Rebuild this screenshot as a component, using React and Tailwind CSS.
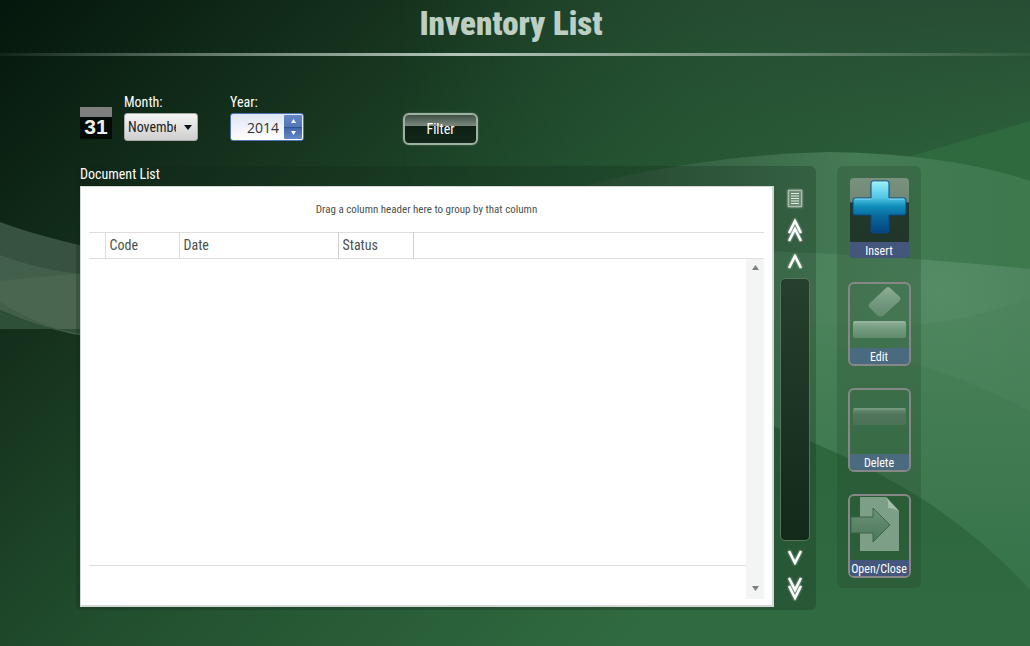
import React, { useState } from 'react'

const months = ['January', 'February', 'March', 'April', 'May', 'June', 'July', 'August', 'September', 'October', 'November', 'December']

const App = () => {
    return (
        <div className="relative isolate min-h-screen flex flex-col overflow-hidden bg-[#1d4429] font-['Liberation_Sans_Narrow','Roboto_Condensed','Liberation_Sans',sans-serif] text-white">
            <Backdrop />
            <header className="h-[56px] flex flex-col justify-between">
                <h1 className="pt-1 pr-2 text-center text-[33px] leading-10 font-black text-[#bccfc2]">Inventory List</h1>
                <div className="h-[3px] bg-[linear-gradient(to_right,#b4c6b910_0%,#b4c6b980_20%,#b4c6b9_45%,#b4c6b9b0_65%,#b4c6b910_100%)]"></div>
            </header>
            <main className="flex-1 flex flex-col pl-[76px] pr-[109px] pb-9">
                <FilterBar />
                <div className="flex-1 flex items-start gap-[21px]">
                    <DocumentPanel />
                    <ActionMenu />
                </div>
            </main>
        </div>
    )
}

export default App


const FilterBar = ()=>{
    const [month,setMonth] = useState('November')
    const [year,setYear] = useState(2014)

    return (
        <div className="h-[110px] pt-9 pl-1 flex items-start">
            <CalendarIcon />
            <div className="ml-3 w-[74px]">
                <label htmlFor="month" className="block pb-px text-[14px] leading-5">Month:</label>
                <div className="relative">
                    <select id="month" value={month} onChange={(e)=>setMonth(e.target.value)}
                        className="block appearance-none w-full h-7 pl-[3px] pr-[21px] rounded-[3px] border border-[#a9a9a9] bg-linear-to-b from-[#f4f4f4] to-[#cfcfcf] text-[14px] text-[#222] outline-none">
                        {months.map((m)=><option key={m}>{m}</option>)}
                    </select>
                    <svg className="absolute right-[6px] top-3 pointer-events-none" width="8" height="5" viewBox="0 0 8 5"><path d="M0 0h8L4 5z" fill="#111" /></svg>
                </div>
            </div>
            <div className="ml-8 w-[74px]">
                <label htmlFor="year" className="block pb-px text-[14px] leading-5">Year:</label>
                <div className="h-7 flex rounded-[3px] border border-[#4f74b8] bg-linear-to-b from-[#dfe5f2] to-white overflow-hidden">
                    <input id="year" type="text" value={year} onChange={(e)=>setYear(Number(e.target.value) || 0)}
                        className="w-full min-w-0 pr-1 pt-px text-right font-['Open_Sans',sans-serif] text-[14px] text-[#333] outline-none" />
                    <div className="w-[18px] shrink-0 m-px flex flex-col gap-px bg-[#2f5496] rounded-xs overflow-hidden">
                        <button aria-label="Next year" onClick={()=>setYear(year + 1)} className="flex-1 flex items-center justify-center bg-linear-to-b from-[#6486c4] to-[#5077b9] cursor-pointer">
                            <svg width="5" height="4" viewBox="0 0 5 4"><path d="M0 4h5L2.500 0z" fill="#fff" /></svg>
                        </button>
                        <button aria-label="Previous year" onClick={()=>setYear(year - 1)} className="flex-1 flex items-center justify-center bg-linear-to-b from-[#4268ab] to-[#6389c8] cursor-pointer">
                            <svg width="5" height="4" viewBox="0 0 5 4"><path d="M0 0h5L2.500 4z" fill="#fff" /></svg>
                        </button>
                    </div>
                </div>
            </div>
            <button className="ml-[99px] mt-[21px] w-[75px] h-8 rounded-md border-2 border-[#9db0a2] bg-[linear-gradient(to_bottom,#3e4f43_0%,#7b887e_38%,#0c2013_40%,#12281a_100%)] text-[14px] leading-none shadow-[0_0_2px_rgba(200,220,205,0.4)] cursor-pointer">Filter</button>
        </div>
    )
}


const DocumentPanel = ()=>{
    return (
        <section className="flex-1 min-w-0 self-stretch flex flex-col rounded-md bg-[#0f2417]/25 pl-1 pb-[3px]">
            <h2 className="h-5 text-[14px] leading-4">Document List</h2>
            <div className="flex-1 flex">
                <DocumentGrid />
                <RecordNavigator />
            </div>
        </section>
    )
}


const DocumentGrid = ()=>{
    return (
        <div className="flex-1 min-w-0 flex flex-col bg-white border-2 border-t border-l border-[#d6d6d6] px-2 pb-[6px] text-[#4a524d]">
            <p className="h-[45px] pt-[15px] text-center text-[11px] leading-4">Drag a column header here to group by that column</p>
            <table className="w-full table-fixed border-y border-[#dedede] text-left text-[14px]">
                <thead>
                    <tr className="h-[26px]">
                        <th aria-label="Row" className="w-4"></th>
                        <th className="w-[74px] pl-1 border-l border-[#dedede] font-normal">Code</th>
                        <th className="w-[159px] pl-1 border-l border-[#dedede] font-normal">Date</th>
                        <th className="w-[75px] pl-1 border-x border-[#cfcfcf] font-normal">Status</th>
                        <td></td>
                    </tr>
                </thead>
            </table>
            <div className="flex-1 flex">
                <div className="flex-1 flex flex-col">
                    <div className="flex-1 border-b border-[#dedede]"></div>
                    <div className="h-[33px]"></div>
                </div>
                <div className="w-[18px] pt-[6px] pb-2 flex flex-col items-center justify-between bg-[#f3f5f4]">
                    <button aria-label="Scroll up"><svg width="7" height="5" viewBox="0 0 7 5"><path d="M0 5h7L3.500 0z" fill="#7c7f7d" /></svg></button>
                    <button aria-label="Scroll down"><svg width="7" height="5" viewBox="0 0 7 5"><path d="M0 0h7L3.500 5z" fill="#7c7f7d" /></svg></button>
                </div>
            </div>
        </div>
    )
}


const navButton = "w-6 flex justify-center cursor-pointer drop-shadow-[0_0_1px_rgba(255,255,255,0.7)]"

const RecordNavigator = ()=>{
    return (
        <div className="w-[42px] flex flex-col items-center pt-[3px] pb-[6px]">
            <button aria-label="Show page" className={navButton}>
                <svg width="16" height="19" viewBox="0 0 16 19" fill="none">
                    <rect x="1.500" y="1.500" width="13" height="16" fill="#6b8a73" stroke="#a9beaf" strokeWidth="1.200" />
                    <path d="M4 4.500h8M4 7h8M4 9.500h8M4 12h8M4 14.500h8" stroke="#dfe9e2" strokeWidth="1.200" />
                </svg>
            </button>
            <button aria-label="First record" className={`${navButton} mt-[10px]`}>
                <svg width="16" height="24" viewBox="0 0 16 24" fill="none" stroke="#fff" strokeWidth="2.400"><path d="M2 15L8 3l6 12M2 23l6-12 6 12" /></svg>
            </button>
            <button aria-label="Previous record" className={`${navButton} mt-3`}>
                <svg width="16" height="15" viewBox="0 0 16 15" fill="none" stroke="#fff" strokeWidth="2.400"><path d="M2 14L8 2l6 12" /></svg>
            </button>
            <div className="flex-1 w-[30px] mt-[9px] mb-2 rounded-[5px] border border-[#55775e] bg-linear-to-b from-[#26402d] to-[#13291a]"></div>
            <button aria-label="Next record" className={`${navButton} mt-px`}>
                <svg width="16" height="15" viewBox="0 0 16 15" fill="none" stroke="#fff" strokeWidth="2.400"><path d="M2 1l6 12 6-12" /></svg>
            </button>
            <button aria-label="Last record" className={`${navButton} mt-3`}>
                <svg width="16" height="24" viewBox="0 0 16 24" fill="none" stroke="#fff" strokeWidth="2.400"><path d="M2 1l6 12 6-12M2 9l6 12 6-12" /></svg>
            </button>
        </div>
    )
}


const ActionMenu = ()=>{
    return (
        <nav className="w-[84px] py-[10px] flex flex-col items-center gap-[22px] rounded-md bg-[#1f4028]/25">
            <ActionButton label="Insert" active><PlusIcon /></ActionButton>
            <ActionButton label="Edit"><EditIcon /></ActionButton>
            <ActionButton label="Delete"><MinusIcon /></ActionButton>
            <ActionButton label="Open/Close" strong><OpenIcon /></ActionButton>
        </nav>
    )
}

const ActionButton = ({label,active,strong,children})=>{
    return (
        <button className={`w-[63px] h-[84px] flex flex-col rounded-md border-2 bg-clip-padding overflow-hidden cursor-pointer ${active?'border-transparent bg-[linear-gradient(to_bottom,#7a9180_0%,#6f8876_30%,#20382a_31%,#22352a_100%)]':'border-[#858886]'}`}>
            <span className="flex-1 w-full flex justify-center">{children}</span>
            <span className={`block w-full h-4 text-center text-[12px] leading-[18px] whitespace-nowrap ${(active || strong)?'bg-[#44567b]':'bg-[#4a6a80]'}`}>{label}</span>
        </button>
    )
}


const CalendarIcon = ()=>(
    <div className="mt-[15px] w-8 h-8 flex flex-col bg-[#030b06]">
        <div className="h-[10px] bg-[#7d807e]"></div>
        <div className="text-center font-['Liberation_Sans',sans-serif] font-bold text-[21px] leading-[19px] text-[#f0f0f0]">31</div>
    </div>
)

const PlusIcon = ()=>(
    <svg width="59" height="64" viewBox="0 0 59 64">
        <defs>
            <linearGradient id="plus" x1="0" y1="0" x2="0" y2="1">
                <stop offset="0" stopColor="#9df2fb" />
                <stop offset="0.330" stopColor="#4fc3e2" />
                <stop offset="0.480" stopColor="#1090bb" />
                <stop offset="0.680" stopColor="#08689c" />
                <stop offset="1" stopColor="#064282" />
            </linearGradient>
        </defs>
        <path d="M23 3h14q2 0 2 2v15h15q2 0 2 2v13q0 2-2 2H39v16q0 2-2 2H23q-2 0-2-2V37H5q-2 0-2-2V22q0-2 2-2h16V5q0-2 2-2z" fill="url(#plus)" stroke="#0b4a86" strokeWidth="1" />
        <path d="M23 4h14M5 21h16M39 21h15" stroke="#b5f4fb" strokeOpacity="0.600" />
    </svg>
)

const EditIcon = ()=>(
    <svg width="59" height="64" viewBox="0 0 59 64">
        <defs>
            <linearGradient id="bar" x1="0" y1="0" x2="0" y2="1">
                <stop offset="0" stopColor="#8fae97" />
                <stop offset="0.450" stopColor="#759b80" />
                <stop offset="1" stopColor="#618a6c" />
            </linearGradient>
        </defs>
        <path d="M36 4q2-2 4 0l10 9q1 2 0 3L32 32q-2 1-4 0l-9-9q-1-2 0-3z" fill="url(#bar)" />
        <path d="M32 32l18-16" stroke="#8aa893" strokeOpacity="0.600" />
        <rect x="3" y="37" width="53" height="17" rx="2" fill="url(#bar)" />
        <path d="M4 38h51" stroke="#a0b9a6" />
    </svg>
)

const MinusIcon = ()=>(
    <svg width="59" height="64" viewBox="0 0 59 64">
        <defs>
            <linearGradient id="minus" x1="0" y1="0" x2="0" y2="1">
                <stop offset="0" stopColor="#6d9077" />
                <stop offset="0.400" stopColor="#50745b" />
                <stop offset="1" stopColor="#4a7256" />
            </linearGradient>
        </defs>
        <rect x="3" y="18" width="53" height="17" rx="2" fill="url(#minus)" />
        <path d="M4 19h51" stroke="#86a38d" />
    </svg>
)

const OpenIcon = ()=>(
    <svg width="59" height="64" viewBox="0 0 59 64">
        <defs>
            <linearGradient id="arrow" x1="0" y1="0" x2="0" y2="1">
                <stop offset="0" stopColor="#6b9278" />
                <stop offset="1" stopColor="#4c7759" />
            </linearGradient>
        </defs>
        <path d="M10 1h26l13 14v40H10z" fill="#7d9f87" />
        <path d="M36 1l13 14q-5-3-11-3q1-6-2-11z" fill="#a6beab" />
        <path d="M1 21h22V12l17 17-17 17v-9H1z" fill="url(#arrow)" stroke="#3d6549" strokeWidth="1" />
    </svg>
)

// dark green wallpaper with the light sweeping curves behind everything
const Backdrop = ()=>(
    <svg className="absolute inset-0 -z-10 w-full h-full" viewBox="0 0 1030 646" preserveAspectRatio="none" aria-hidden="true">
        <defs>
            <linearGradient id="base" gradientUnits="userSpaceOnUse" x1="0" y1="0" x2="620" y2="646">
                <stop offset="0" stopColor="#04170c" />
                <stop offset="0.300" stopColor="#15311d" />
                <stop offset="0.600" stopColor="#22502f" />
                <stop offset="1" stopColor="#306a40" />
            </linearGradient>
            <linearGradient id="top" x1="0" y1="0" x2="0" y2="1">
                <stop offset="0" stopColor="#284b34" stopOpacity="0.900" />
                <stop offset="1" stopColor="#2b5f3a" stopOpacity="0.300" />
            </linearGradient>
            <linearGradient id="topFade" x1="0" y1="0" x2="1" y2="0">
                <stop offset="0" stopColor="#000" />
                <stop offset="0.700" stopColor="#fff" />
            </linearGradient>
            <mask id="topMask"><rect x="400" width="630" height="200" fill="url(#topFade)" /></mask>
            <linearGradient id="wave" gradientUnits="userSpaceOnUse" x1="580" y1="0" x2="1030" y2="0">
                <stop offset="0" stopColor="#2c5237" />
                <stop offset="0.600" stopColor="#457a55" />
                <stop offset="1" stopColor="#3d794d" />
            </linearGradient>
            <radialGradient id="bright" gradientUnits="userSpaceOnUse" cx="940" cy="290" r="180">
                <stop offset="0" stopColor="#558c65" />
                <stop offset="1" stopColor="#477e57" />
            </radialGradient>
            <linearGradient id="slope" gradientUnits="userSpaceOnUse" x1="0" y1="310" x2="0" y2="580">
                <stop offset="0" stopColor="#4a8159" />
                <stop offset="1" stopColor="#37744a" />
            </linearGradient>
            <linearGradient id="low" gradientUnits="userSpaceOnUse" x1="0" y1="420" x2="0" y2="620">
                <stop offset="0" stopColor="#2e663c" />
                <stop offset="1" stopColor="#306a40" />
            </linearGradient>
        </defs>
        <rect width="1030" height="646" fill="url(#base)" />
        <rect x="400" width="630" height="200" fill="url(#top)" mask="url(#topMask)" />
        <path d="M880 165Q950 145 1030 121V220H880z" fill="#2f6a3f" />
        <path d="M580 187Q700 155 830 152Q950 154 1030 181V280H580z" fill="url(#wave)" />
        <path d="M700 249Q860 252 1030 269V420H700z" fill="url(#bright)" />
        <path d="M700 300Q890 355 1030 297V640H700z" fill="url(#slope)" fillOpacity="0.500" />
        <path d="M700 330Q900 340 1030 411V640H700z" fill="url(#slope)" />
        <path d="M700 400Q850 450 933 506Q990 545 1030 590V646H700z" fill="url(#low)" />
        <path d="M0 222Q40 237 110 252V336Q50 330 0 310z" fill="#375240" />
        <path d="M0 255Q40 270 80 274H110V340Q50 333 0 310z" fill="#425f4b" />
        <path d="M0 281Q40 276 110 272V340Q50 333 0 302z" fill="#4a6650" />
        <path d="M0 310Q40 330 110 338V329H0z" fill="#2e5038" />
    </svg>
)
